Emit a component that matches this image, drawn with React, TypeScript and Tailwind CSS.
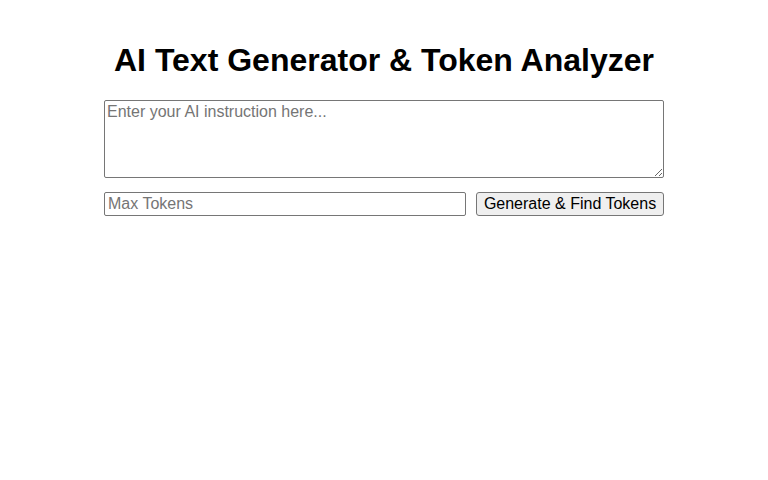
export default function App() {
  return (
    <div className="min-h-screen bg-white font-['Liberation_Sans',Arial,sans-serif] text-black">
      <div className="mx-auto flex w-[560px] flex-col pt-[42px]">
        {/* Heading */}
        <h1 className="mb-[21px] text-center text-[32px] font-bold leading-[37px]">
          AI Text Generator &amp; Token Analyzer
        </h1>

        {/* Prompt */}
        <textarea
          placeholder="Enter your AI instruction here..."
          className="h-[78px] w-full rounded-[2px] border border-[#767676] px-[2px] py-[2px] text-[16px] leading-[18px] placeholder:text-[#757575]"
        />

        {/* Controls row */}
        <div className="mt-[14px] flex items-center gap-[10px]">
          <input
            type="number"
            placeholder="Max Tokens"
            className="h-[24px] flex-1 rounded-[2px] border border-[#767676] px-[3px] text-[16px] leading-[18px] placeholder:text-[#757575]"
          />
          <button className="h-[24px] w-[188px] rounded-[3px] border border-[#767676] bg-[#efefef] px-[6px] text-[16px] leading-[18px]">
            Generate &amp; Find Tokens
          </button>
        </div>
      </div>
    </div>
  );
}
